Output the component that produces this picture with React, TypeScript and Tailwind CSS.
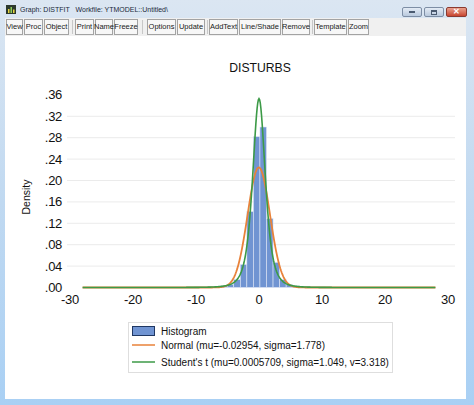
import React from "react";

// chart mapping (page coordinates, svg viewBox is offset to match)
const X = (v: number) => 259 + v * 6.3;
const Y = (d: number) => 287.5 - d * 535;

const LG = [
  0.99999999999980993, 676.5203681218851, -1259.1392167224028, 771.32342877765313,
  -176.61502916214059, 12.507343278686905, -0.13857109526572012, 9.9843695780195716e-6,
  1.5056327351493116e-7,
];
function gamma(z: number): number {
  if (z < 0.5) return Math.PI / (Math.sin(Math.PI * z) * gamma(1 - z));
  z -= 1;
  let x = LG[0];
  for (let i = 1; i < 9; i++) x += LG[i] / (z + i);
  const t = z + 7.5;
  return Math.sqrt(2 * Math.PI) * Math.pow(t, z + 0.5) * Math.exp(-t) * x;
}

const normal = (v: number) => {
  const mu = -0.02954, s = 1.778;
  const z = (v - mu) / s;
  return Math.exp(-0.5 * z * z) / (s * Math.sqrt(2 * Math.PI));
};
const studentT = (v: number) => {
  const mu = 0.0005709, s = 1.049, n = 3.318;
  const z = (v - mu) / s;
  const c = gamma((n + 1) / 2) / (Math.sqrt(n * Math.PI) * gamma(n / 2));
  return (c * Math.pow(1 + (z * z) / n, -(n + 1) / 2)) / s;
};

function curve(f: (v: number) => number) {
  const pts: string[] = [];
  for (let v = -28; v <= 28.001; v += 0.1) {
    pts.push(`${X(v).toFixed(2)},${Y(f(v)).toFixed(2)}`);
  }
  return "M" + pts.join("L");
}

const binW = 1.04;
const heights: [number, number][] = [
  [-10, 0.001], [-9, 0.001], [-8, 0.001], [-7, 0.002], [-6, 0.003], [-5, 0.006],
  [-4, 0.015], [-3, 0.043], [-2, 0.142], [-1, 0.282], [0, 0.3], [1, 0.129],
  [2, 0.047], [3, 0.015], [4, 0.006], [5, 0.003], [6, 0.002], [7, 0.001],
  [8, 0.001], [9, 0.001],
];

const yTicks = [".36", ".32", ".28", ".24", ".20", ".16", ".12", ".08", ".04", ".00"];
const xTicks = [-30, -20, -10, 0, 10, 20, 30];

const font = "'Liberation Sans', Arial, sans-serif";

function Chart() {
  return (
    <svg width="461" height="363" viewBox="5 36 461 363" className="block">
      <text x="260" y="72" textAnchor="middle" fontSize="12.2" fill="#111" fontFamily={font}>
        DISTURBS
      </text>

      {yTicks.map((t, i) => {
        const d = 0.36 - i * 0.04;
        const y = Y(d);
        return (
          <g key={t}>
            {i > 0 && i < 9 && (
              <line x1="67" x2="455" y1={y} y2={y} stroke="#ebebeb" strokeWidth="1" />
            )}
            <text x="62" y={y + 4.5} textAnchor="end" fontSize="13" fill="#111" fontFamily={font} letterSpacing="-0.3">
              {t}
            </text>
          </g>
        );
      })}

      {xTicks.map((t) => (
        <text key={t} x={X(t)} y="304" textAnchor="middle" fontSize="13" fill="#111" fontFamily={font} letterSpacing="-0.3">
          {t}
        </text>
      ))}

      <text
        x="0"
        y="0"
        transform="translate(30 197) rotate(-90)"
        textAnchor="middle"
        fontSize="10.5"
        fill="#111"
        fontFamily={font}
      >
        Density
      </text>

      {/* histogram */}
      {heights.map(([k, h]) => {
        const l = 0.15 + k * binW;
        const x1 = X(l);
        const x2 = X(l + binW);
        return (
          <rect
            key={k}
            x={x1}
            y={Y(h)}
            width={x2 - x1}
            height={Y(0) - Y(h)}
            fill="#7094d2"
            stroke="#dfe7f5"
            strokeWidth="0.6"
          />
        );
      })}

      <path d={curve(normal)} fill="none" stroke="#e8823a" strokeWidth="1.8" />
      <path d={curve(studentT)} fill="none" stroke="#3c9a47" strokeWidth="1.6" />

      {/* legend */}
      <rect x="128.5" y="322.5" width="264" height="50" fill="#fff" stroke="#dedede" />
      <rect x="132.5" y="326.5" width="22" height="9" fill="#7094d2" stroke="#1f3763" />
      <text x="161" y="334.5" fontSize="10" fill="#111" fontFamily={font}>Histogram</text>
      <line x1="132" x2="155" y1="345" y2="345" stroke="#e8823a" strokeWidth="1.5" />
      <text x="161" y="348.5" fontSize="10" fill="#111" fontFamily={font}>
        Normal (mu=-0.02954, sigma=1.778)
      </text>
      <line x1="132" x2="155" y1="362" y2="362" stroke="#3c9a47" strokeWidth="1.5" />
      <text x="161" y="365.5" fontSize="10" fill="#111" fontFamily={font}>
        Student's t (mu=0.0005709, sigma=1.049, v=3.318)
      </text>
    </svg>
  );
}

function Btn({ label, w }: { label: string; w: string }) {
  return (
    <div
      className={`${w} h-[16px] flex items-center justify-center border border-[#a3a3a3] bg-[#f7f7f7] text-[7.5px] text-[#1a1a1a] leading-none`}
    >
      {label}
    </div>
  );
}

function Sep({ w }: { w: string }) {
  return (
    <div className={`${w} h-[14px] flex justify-center`}>
      <div className="w-px h-full bg-[#c8c8c8]" />
    </div>
  );
}

export default function App() {
  return (
    <div
      className="w-[474px] h-[405px] flex flex-col bg-gradient-to-b from-[#dbe6f2] via-[#c0d9f1] to-[#a9d0f4] overflow-hidden"
      style={{ fontFamily: font }}
    >
      {/* title bar */}
      <div className="h-[18px] flex items-start">
        <div className="flex items-center gap-[4px] pl-[6px] pt-[5px]">
          <svg width="10" height="9" viewBox="0 0 10 9">
            <rect x="0" y="0" width="10" height="9" fill="#2d3a2d" />
            <rect x="2" y="4" width="1.5" height="4" fill="#e6d640" />
            <rect x="4.5" y="2" width="1.5" height="6" fill="#8fd05a" />
            <rect x="7" y="4.5" width="1.5" height="3.5" fill="#e6d640" />
          </svg>
          <span className="text-[7px] leading-none text-[#1b2a3a]">
            Graph: DISTFIT&nbsp;&nbsp; Workfile: YTMODEL::Untitled\
          </span>
        </div>
        <div className="ml-auto mr-[7px] mt-[7px] flex gap-[2px]">
          <div className="w-[20px] h-[10px] rounded-[2px] border border-[#7d8ea5] bg-gradient-to-b from-[#e3ebf5] to-[#b9c9dd] flex items-center justify-center">
            <div className="w-[6px] h-[2px] bg-[#4a5a70]" />
          </div>
          <div className="w-[20px] h-[10px] rounded-[2px] border border-[#7d8ea5] bg-gradient-to-b from-[#e3ebf5] to-[#b9c9dd] flex items-center justify-center">
            <div className="w-[6px] h-[5px] border border-[#4a5a70] border-t-2" />
          </div>
          <div className="w-[21px] h-[10px] rounded-[2px] border border-[#8a3a30] bg-gradient-to-b from-[#e8a08e] to-[#c7432f] flex items-center justify-center text-[8px] leading-none text-white font-bold">
            ✕
          </div>
        </div>
      </div>

      {/* toolbar */}
      <div className="ml-[5px] mr-[8px] h-[18px] bg-[#f0f0f0] flex items-center gap-px pl-px">
        <Btn label="View" w="w-[17px]" />
        <Btn label="Proc" w="w-[19px]" />
        <Btn label="Object" w="w-[25px]" />
        <Sep w="w-[4px]" />
        <Btn label="Print" w="w-[19px]" />
        <Btn label="Name" w="w-[18px]" />
        <Btn label="Freeze" w="w-[24px]" />
        <Sep w="w-[7px]" />
        <Btn label="Options" w="w-[29px]" />
        <Btn label="Update" w="w-[28px]" />
        <Sep w="w-[2px]" />
        <Btn label="AddText" w="w-[29px]" />
        <Btn label="Line/Shade" w="w-[42px]" />
        <Btn label="Remove" w="w-[28px]" />
        <Sep w="w-[2px]" />
        <Btn label="Template" w="w-[33px]" />
        <Btn label="Zoom" w="w-[21px]" />
      </div>

      {/* graph area */}
      <div className="ml-[5px] mr-[8px] mb-[6px] flex-1 bg-white">
        <Chart />
      </div>
    </div>
  );
}
